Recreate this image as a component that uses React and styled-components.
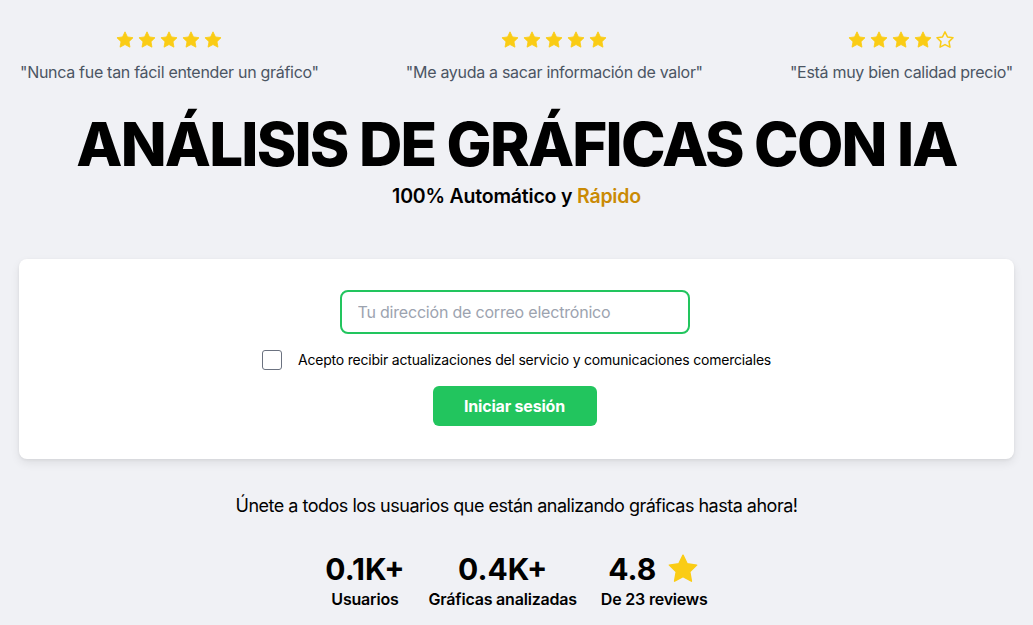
import styled, { createGlobalStyle } from "styled-components";

const Global = createGlobalStyle`
  html, body {
    margin: 0;
    padding: 0;
    background: #f0f1f5;
  }
  body {
    font-family: Inter, "Noto Sans", sans-serif;
    color: #000;
  }
`;

const Page = styled.main`
  min-height: 625px;
  display: flex;
  flex-direction: column;
  align-items: center;
`;

const Reviews = styled.section`
  width: 100%;
  box-sizing: border-box;
  display: flex;
  justify-content: space-between;
  padding: 30px 20px 0;
`;

const Review = styled.div`
  display: flex;
  flex-direction: column;
  align-items: center;
  gap: 10px;
`;

const Stars = styled.div`
  display: flex;
  gap: 2px;
`;

const Quote = styled.p`
  margin: 0;
  font-size: 16px;
  line-height: 24px;
  letter-spacing: -0.3px;
  color: #4b5563;
`;

const Title = styled.h1`
  margin: 24px 0 0;
  font-size: 60px;
  line-height: 72px;
  font-weight: 800;
  letter-spacing: -1.8px;
`;

const Subtitle = styled.h2`
  margin: 2px 0 0;
  font-size: 19.5px;
  line-height: 28px;
  font-weight: 600;
  letter-spacing: -0.2px;
`;

const Accent = styled.span`
  color: #ca8a04;
`;

const Card = styled.form`
  box-sizing: border-box;
  width: calc(100% - 38px);
  margin-top: 49px;
  background: #fff;
  border-radius: 8px;
  box-shadow: 0 4px 10px rgba(0, 0, 0, 0.08), 0 1px 3px rgba(0, 0, 0, 0.06);
  padding: 31px 0 33px;
  display: flex;
  flex-direction: column;
  align-items: center;
`;

const Email = styled.input`
  box-sizing: border-box;
  width: 350px;
  height: 44px;
  margin-left: -4px;
  border: 2px solid #22c55e;
  border-radius: 8px;
  padding: 0 16px;
  font-family: inherit;
  font-size: 16px;
  letter-spacing: -0.2px;
  outline: none;
  &::placeholder {
    color: #9ca3af;
  }
`;

const Consent = styled.label`
  display: flex;
  align-items: center;
  gap: 16px;
  margin-top: 16px;
  font-size: 14px;
  line-height: 20px;
  letter-spacing: -0.2px;
  color: #000;
`;

const Box = styled.span`
  box-sizing: border-box;
  width: 20px;
  height: 20px;
  border: 1px solid #6b7280;
  border-radius: 3px;
  background: #fff;
`;

const Submit = styled.button`
  margin-top: 16px;
  width: 164px;
  height: 40px;
  margin-left: -4px;
  border: none;
  border-radius: 6px;
  background: #22c55e;
  color: #fff;
  font-family: inherit;
  font-size: 16px;
  font-weight: 700;
  letter-spacing: -0.2px;
`;

const Join = styled.p`
  margin: 33px 0 0;
  font-size: 18px;
  line-height: 28px;
  letter-spacing: -0.5px;
`;

const StatsRow = styled.div`
  display: flex;
  gap: 24px;
  margin-top: 31px;
`;

const Stat = styled.div`
  display: flex;
  flex-direction: column;
  align-items: center;
`;

const Number = styled.div`
  display: flex;
  align-items: center;
  gap: 10px;
  font-size: 30px;
  line-height: 36px;
  font-weight: 700;
`;

const Label = styled.div`
  font-size: 16px;
  line-height: 24px;
  font-weight: 600;
  letter-spacing: -0.2px;
`;

function Star({ size = 20, filled = true }) {
  return (
    <svg width={size} height={size} viewBox="0 0 24 24">
      <path
        d="M12 2.2l2.95 6.1 6.7.95-4.85 4.7 1.15 6.65L12 17.45 6.05 20.6l1.15-6.65L2.35 9.25l6.7-.95z"
        fill={filled ? "#facc15" : "none"}
        stroke="#facc15"
        strokeWidth={filled ? 1 : 1.8}
        strokeLinejoin="round"
      />
    </svg>
  );
}

const reviews = [
  { rating: 5, text: '"Nunca fue tan fácil entender un gráfico"' },
  { rating: 5, text: '"Me ayuda a sacar información de valor"' },
  { rating: 4, text: '"Está muy bien calidad precio"' },
];

const stats = [
  { value: "0.1K+", label: "Usuarios" },
  { value: "0.4K+", label: "Gráficas analizadas" },
  { value: "4.8", label: "De 23 reviews", star: true },
];

export default function App() {
  return (
    <Page>
      <Global />
      <Reviews>
        {reviews.map((r) => (
          <Review key={r.text}>
            <Stars>
              {[0, 1, 2, 3, 4].map((i) => (
                <Star key={i} filled={i < r.rating} />
              ))}
            </Stars>
            <Quote>{r.text}</Quote>
          </Review>
        ))}
      </Reviews>

      <Title>ANÁLISIS DE GRÁFICAS CON IA</Title>
      <Subtitle>
        100% Automático y <Accent>Rápido</Accent>
      </Subtitle>

      <Card onSubmit={(e) => e.preventDefault()}>
        <Email type="email" placeholder="Tu dirección de correo electrónico" />
        <Consent>
          <Box />
          Acepto recibir actualizaciones del servicio y comunicaciones comerciales
        </Consent>
        <Submit type="submit">Iniciar sesión</Submit>
      </Card>

      <Join>Únete a todos los usuarios que están analizando gráficas hasta ahora!</Join>

      <StatsRow>
        {stats.map((s) => (
          <Stat key={s.label}>
            <Number>
              {s.value}
              {s.star && <Star size={34} />}
            </Number>
            <Label>{s.label}</Label>
          </Stat>
        ))}
      </StatsRow>
    </Page>
  );
}
